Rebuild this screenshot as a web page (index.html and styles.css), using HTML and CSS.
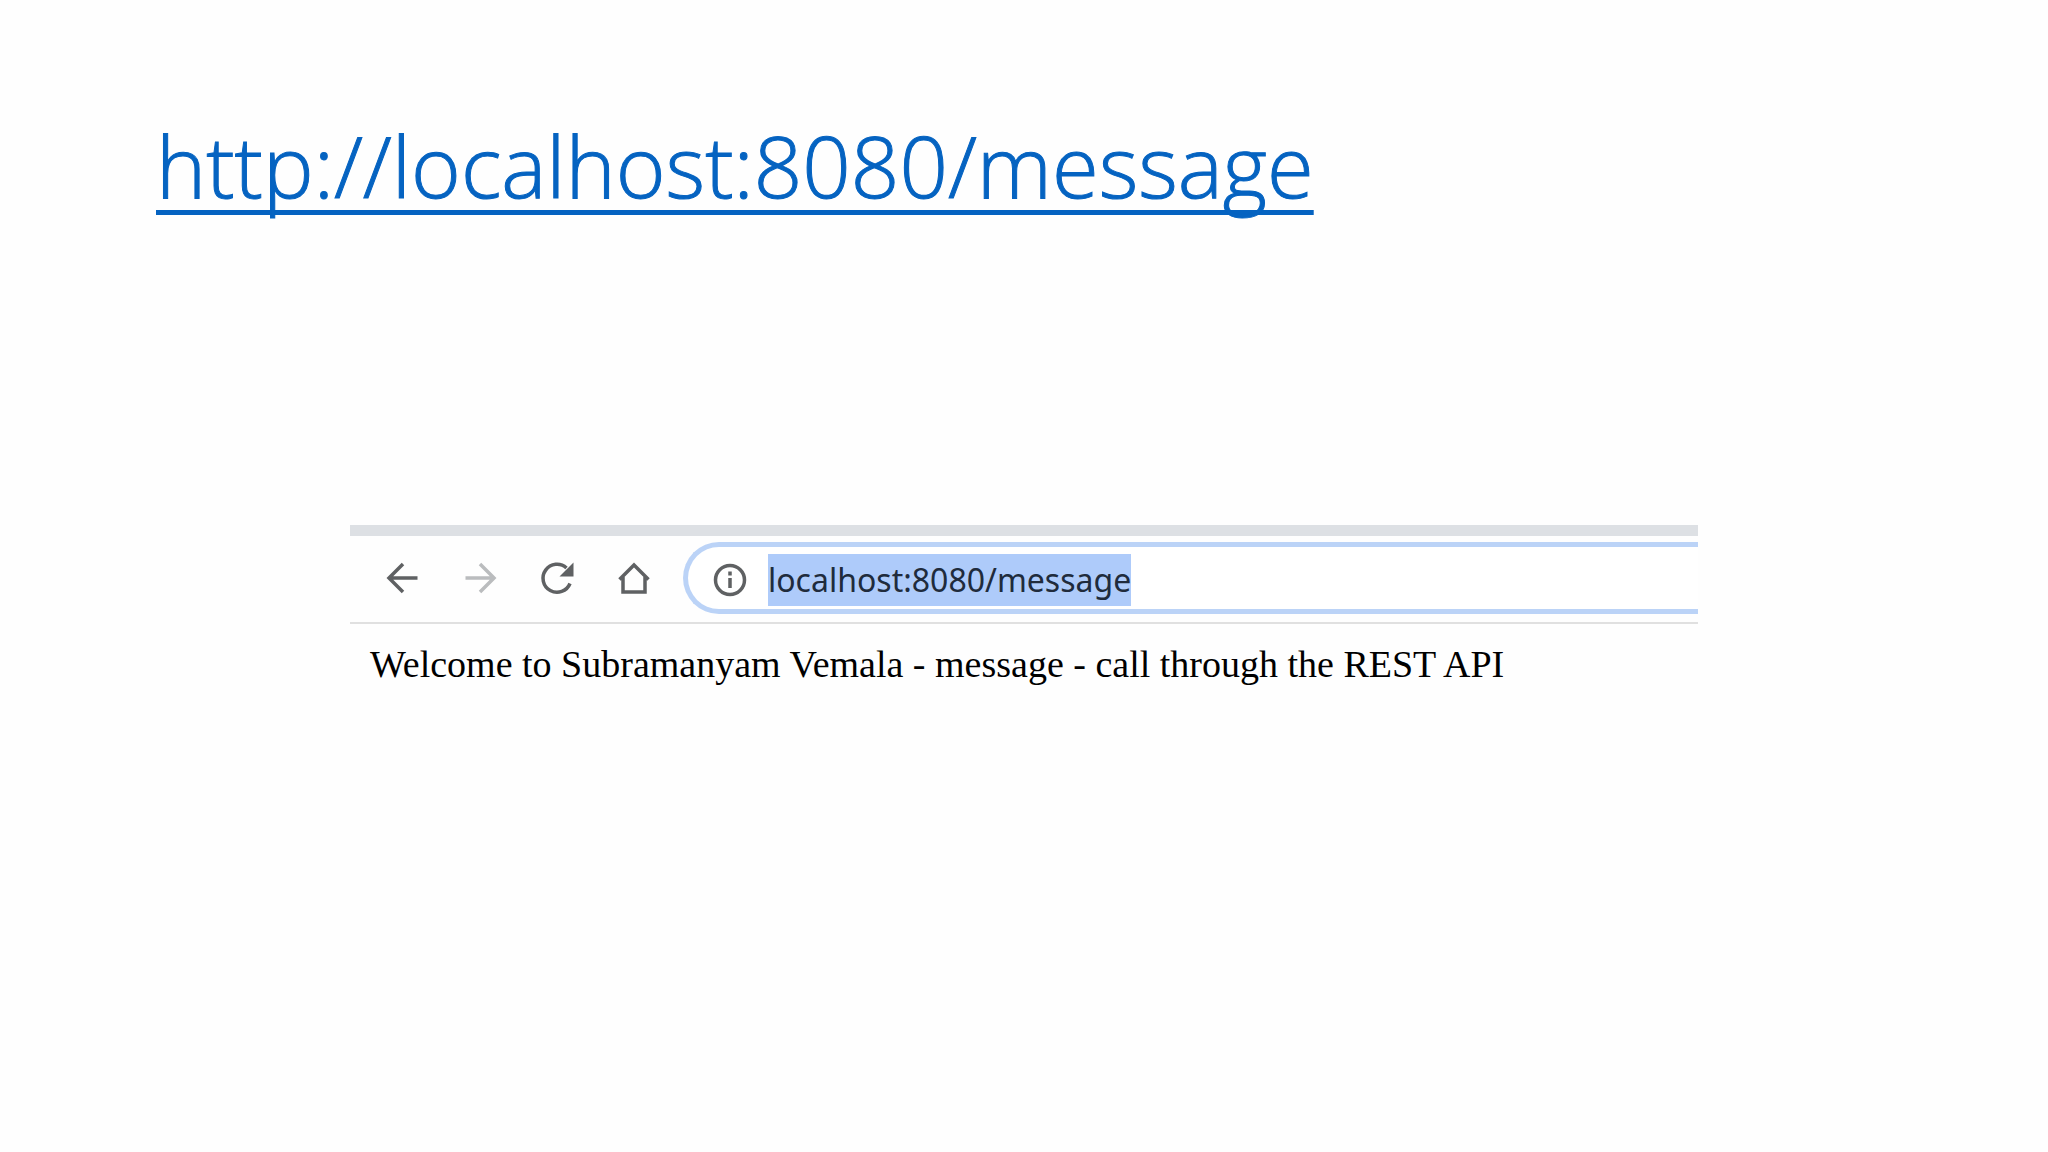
FILE: index.html
```html
<!DOCTYPE html>
<html lang="en">
<head>
  <meta charset="utf-8">
  <meta name="viewport" content="width=device-width, initial-scale=1">
  <title>http://localhost:8080/message</title>
  <link rel="stylesheet" href="styles.css">
</head>
<body>
  <main class="slide">
    <h1 class="title"><a href="http://localhost:8080/message">http://localhost:8080/message</a></h1>

    <section class="browser" aria-label="Browser window">
      <div class="toolbar">
        <nav class="nav" aria-label="Navigation">
          <button class="nav-button" type="button" aria-label="Back">
            <svg class="icon" viewBox="0 0 36 36"><path d="M32.500 18H4M18 4L4 18l14 14"/></svg>
          </button>
          <button class="nav-button" type="button" aria-label="Forward" disabled>
            <svg class="icon" viewBox="0 0 36 36"><path d="M3.500 18H32M18 4l14 14-14 14"/></svg>
          </button>
          <button class="nav-button" type="button" aria-label="Reload">
            <svg class="icon" viewBox="0 0 36 36"><path d="M31 23.500A14 14 0 1 1 27.500 8"/><path class="solid" d="M34.500 2.500V16.500H20.500z"/></svg>
          </button>
          <button class="nav-button" type="button" aria-label="Home">
            <svg class="icon" viewBox="0 0 36 36"><path d="M3.500 19.500L18 5l14.500 14.500M7 17v15h22V17"/></svg>
          </button>
        </nav>
        <div class="address">
          <svg class="info" viewBox="0 0 36 36" aria-hidden="true"><circle cx="18" cy="18" r="14.500"/><path d="M18 16v10M18 9.500v4"/></svg>
          <input class="url" type="text" aria-label="Address" value="localhost:8080/message" spellcheck="false">
        </div>
      </div>
      <p class="page">Welcome to Subramanyam Vemala - message - call through the REST API</p>
    </section>
  </main>
</body>
</html>
```
FILE: styles.css
```css
* {
  box-sizing: border-box;
}

body {
  margin: 0;
  background: #fefefe;
}

.slide {
  padding: 105px 0 0;
}

.title {
  margin: 0 156px;
  font: 300 85px/120px "Open Sans", sans-serif;
}

.title a {
  color: #0563c1;
  text-decoration: underline;
  text-decoration-thickness: 5px;
  text-decoration-skip-ink: none;
  text-underline-offset: 12px;
  -webkit-text-stroke: 1px #0563c1;
}

.browser {
  margin: 300px 350px 0;
  border-top: 11px solid #dde0e4;
}

.toolbar {
  display: flex;
  padding: 6px 0 8px 14px;
  border-bottom: 2px solid #e0e0e0;
}

.nav {
  display: flex;
  margin-right: 11px;
}

.nav-button {
  display: flex;
  align-items: center;
  justify-content: center;
  width: 77px;
  padding: 0;
  border: 0;
  background: none;
  color: #5f6163;
}

.nav-button:disabled {
  color: #babcbe;
}

.icon,
.info {
  flex: none;
  width: 36px;
  height: 36px;
  fill: none;
  stroke: currentColor;
  stroke-width: 3.500;
}

.icon .solid {
  fill: currentColor;
  stroke: none;
}

.address {
  display: flex;
  flex: 1;
  align-items: center;
  gap: 20px;
  height: 72px;
  padding: 3px 0 0 24px;
  border: 5px solid #bbd3f7;
  border-right: 0;
  border-radius: 36px 0 0 36px;
  background: #fff;
}

.info {
  color: #5f6163;
}

.url {
  height: 52px;
  padding: 0;
  border: 0;
  outline: 0;
  background: #aecbfa;
  color: #202b3c;
  font: 32px/52px "Noto Sans", sans-serif;
  field-sizing: content;
}

.page {
  margin: 0;
  padding: 18px 20px;
  color: #000;
  font: 38px/44px "Liberation Serif", serif;
}
```
